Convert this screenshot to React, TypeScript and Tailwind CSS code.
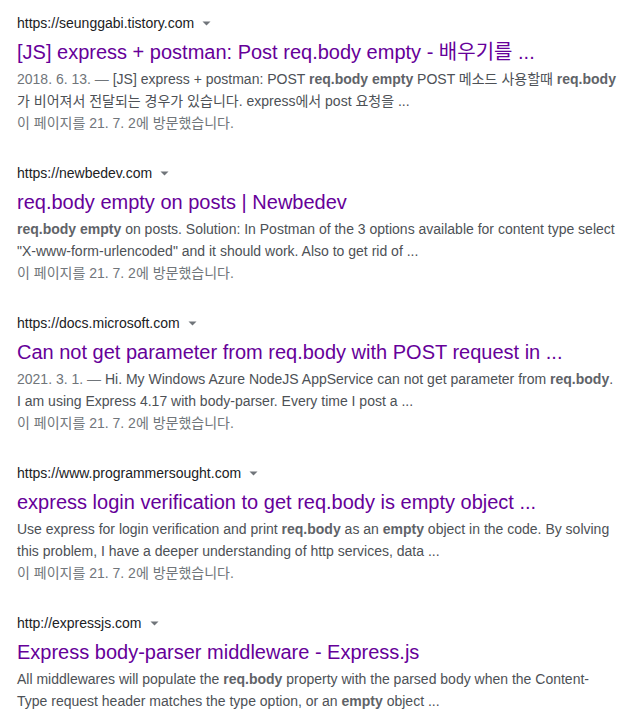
import React from "react";

type Part = string | { b: string };

interface Result {
  url: string;
  title: string;
  date?: string;
  lines: Part[][];
  visited: boolean;
}

const results: Result[] = [
  {
    url: "https://seunggabi.tistory.com",
    title: "[JS] express + postman: Post req.body empty - 배우기를 ...",
    date: "2018. 6. 13. — ",
    lines: [
      ["[JS] express + postman: POST ", { b: "req.body empty" }, " POST 메소드 사용할때 ", { b: "req.body" }],
      ["가 비어져서 전달되는 경우가 있습니다. express에서 post 요청을 ..."],
    ],
    visited: true,
  },
  {
    url: "https://newbedev.com",
    title: "req.body empty on posts | Newbedev",
    lines: [
      [{ b: "req.body empty" }, " on posts. Solution: In Postman of the 3 options available for content type select"],
      ['"X-www-form-urlencoded" and it should work. Also to get rid of ...'],
    ],
    visited: true,
  },
  {
    url: "https://docs.microsoft.com",
    title: "Can not get parameter from req.body with POST request in ...",
    date: "2021. 3. 1. — ",
    lines: [
      ["Hi. My Windows Azure NodeJS AppService can not get parameter from ", { b: "req.body" }, "."],
      ["I am using Express 4.17 with body-parser. Every time I post a ..."],
    ],
    visited: true,
  },
  {
    url: "https://www.programmersought.com",
    title: "express login verification to get req.body is empty object ...",
    lines: [
      ["Use express for login verification and print ", { b: "req.body" }, " as an ", { b: "empty" }, " object in the code. By solving"],
      ["this problem, I have a deeper understanding of http services, data ..."],
    ],
    visited: true,
  },
  {
    url: "http://expressjs.com",
    title: "Express body-parser middleware - Express.js",
    lines: [
      ["All middlewares will populate the ", { b: "req.body" }, " property with the parsed body when the Content-"],
      ["Type request header matches the type option, or an ", { b: "empty" }, " object ..."],
    ],
    visited: false,
  },
];

function Caret() {
  return (
    <svg width="9" height="5" viewBox="0 0 9 5" className="ml-[8px] mt-[1px]">
      <path d="M0.5 0.5 L8.5 0.5 L4.5 4.5 Z" fill="#70757a" />
    </svg>
  );
}

function Line({ parts, date }: { parts: Part[]; date?: string }) {
  return (
    <div className="h-[22px] leading-[22px] whitespace-nowrap">
      {date && <span className="text-[#70757a]">{date}</span>}
      {parts.map((p, i) =>
        typeof p === "string" ? (
          <span key={i}>{p}</span>
        ) : (
          <b key={i} className="font-bold text-[#5f6368]">
            {p.b}
          </b>
        )
      )}
    </div>
  );
}

export default function App() {
  return (
    <div
      className="w-[632px] min-h-[728px] bg-white pl-[17px] pt-[13px]"
      style={{ fontFamily: '"Liberation Sans", Arial, "Noto Sans CJK KR", sans-serif' }}
    >
      <div className="flex w-[600px] flex-col gap-[29px]">
        {results.map((r) => (
          <div key={r.url} className="flex flex-col">
            <div className="flex h-[20px] items-center text-[14px] text-[#202124]">
              <span>{r.url}</span>
              <Caret />
            </div>
            <div className="mt-[6px] h-[26px] whitespace-nowrap text-[20px] leading-[26px] text-[#660099]">
              {r.title}
            </div>
            <div className="mt-[3px] text-[14px] text-[#4d5156]">
              {r.lines.map((l, i) => (
                <Line key={i} parts={l} date={i === 0 ? r.date : undefined} />
              ))}
              {r.visited && (
                <div className="h-[22px] leading-[22px] text-[#70757a]">이 페이지를 21. 7. 2에 방문했습니다.</div>
              )}
            </div>
          </div>
        ))}
      </div>
    </div>
  );
}
